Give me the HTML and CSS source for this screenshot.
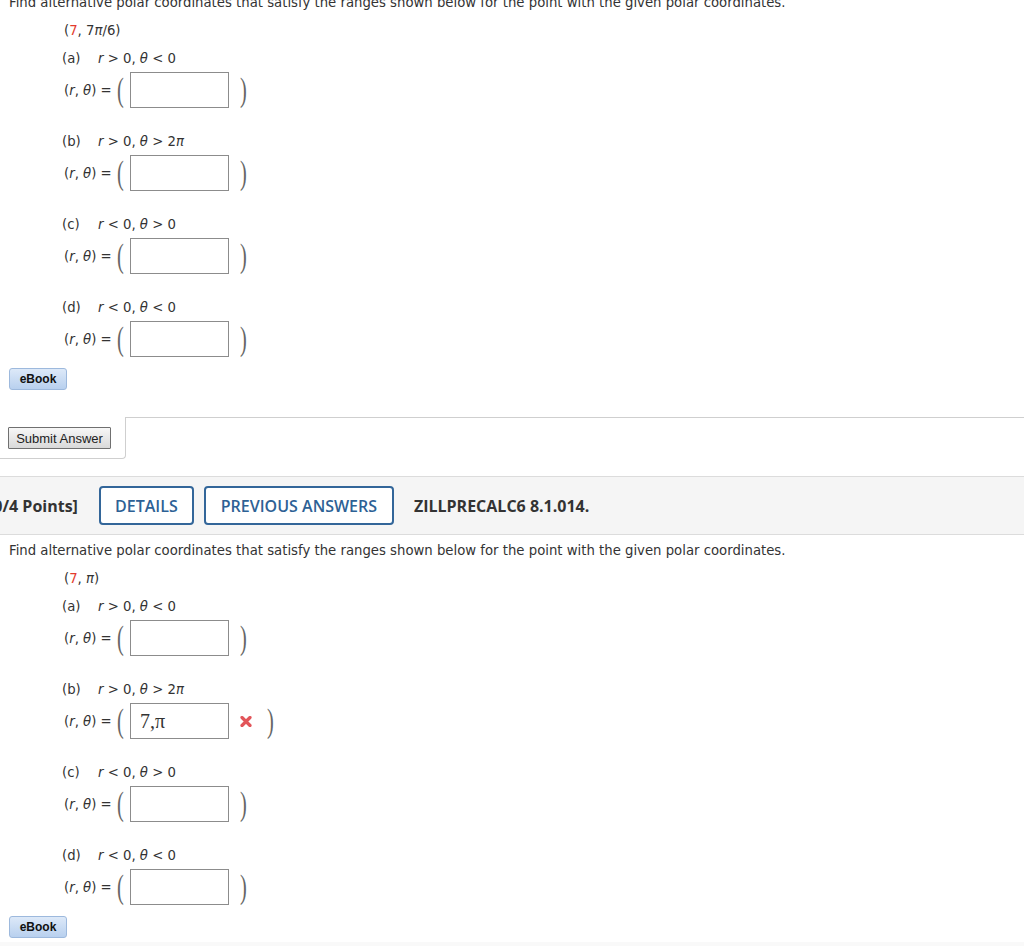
FILE: index.html
```html
<!DOCTYPE html>
<html>
<head>
<meta charset="utf-8">
<link rel="stylesheet" href="styles.css">
</head>
<body>
<div class="q q1">
  <p class="prompt">Find alternative polar coordinates that satisfy the ranges shown below for the point with the given polar coordinates.</p>
  <div class="point">(<span class="red">7</span>, 7<i>π</i>/6)</div>
  <div class="part">
    <div class="label"><span class="tag">(a)</span><i>r</i> &gt; 0, <i>θ</i> &lt; 0</div>
    <div class="answer"><span class="rt">(<i>r</i>, <i>θ</i>) =</span><span class="paren">(</span><span class="box"></span><span class="paren close">)</span></div>
  </div>
  <div class="part">
    <div class="label"><span class="tag">(b)</span><i>r</i> &gt; 0, <i>θ</i> &gt; 2<i>π</i></div>
    <div class="answer"><span class="rt">(<i>r</i>, <i>θ</i>) =</span><span class="paren">(</span><span class="box"></span><span class="paren close">)</span></div>
  </div>
  <div class="part">
    <div class="label"><span class="tag">(c)</span><i>r</i> &lt; 0, <i>θ</i> &gt; 0</div>
    <div class="answer"><span class="rt">(<i>r</i>, <i>θ</i>) =</span><span class="paren">(</span><span class="box"></span><span class="paren close">)</span></div>
  </div>
  <div class="part">
    <div class="label"><span class="tag">(d)</span><i>r</i> &lt; 0, <i>θ</i> &lt; 0</div>
    <div class="answer"><span class="rt">(<i>r</i>, <i>θ</i>) =</span><span class="paren">(</span><span class="box"></span><span class="paren close">)</span></div>
  </div>
  <button class="ebook">eBook</button>
</div>

<div class="submit-row">
  <div class="submit-cell"><button class="submit">Submit Answer</button></div>
  <div class="submit-rest"></div>
</div>

<div class="qbar">
  <span class="points">[0/4 Points]</span>
  <button class="hbtn details">DETAILS</button>
  <button class="hbtn prev">PREVIOUS ANSWERS</button>
  <span class="code">ZILLPRECALC6 8.1.014.</span>
</div>

<div class="q q2">
  <p class="prompt">Find alternative polar coordinates that satisfy the ranges shown below for the point with the given polar coordinates.</p>
  <div class="point">(<span class="red">7</span>, <i>π</i>)</div>
  <div class="part">
    <div class="label"><span class="tag">(a)</span><i>r</i> &gt; 0, <i>θ</i> &lt; 0</div>
    <div class="answer"><span class="rt">(<i>r</i>, <i>θ</i>) =</span><span class="paren">(</span><span class="box"></span><span class="paren close">)</span></div>
  </div>
  <div class="part">
    <div class="label"><span class="tag">(b)</span><i>r</i> &gt; 0, <i>θ</i> &gt; 2<i>π</i></div>
    <div class="answer"><span class="rt">(<i>r</i>, <i>θ</i>) =</span><span class="paren">(</span><span class="box filled">7,π</span><span class="wrong"><svg width="12" height="11" viewBox="0 0 12 11"><path d="M2 1.5 L10 9.5 M10 1.5 L2 9.5" stroke="#e2555a" stroke-width="3.2" stroke-linecap="round"/></svg></span><span class="paren close">)</span></div>
  </div>
  <div class="part">
    <div class="label"><span class="tag">(c)</span><i>r</i> &lt; 0, <i>θ</i> &gt; 0</div>
    <div class="answer"><span class="rt">(<i>r</i>, <i>θ</i>) =</span><span class="paren">(</span><span class="box"></span><span class="paren close">)</span></div>
  </div>
  <div class="part">
    <div class="label"><span class="tag">(d)</span><i>r</i> &lt; 0, <i>θ</i> &lt; 0</div>
    <div class="answer"><span class="rt">(<i>r</i>, <i>θ</i>) =</span><span class="paren">(</span><span class="box"></span><span class="paren close">)</span></div>
  </div>
  <button class="ebook">eBook</button>
</div>
<div class="next-bar"></div>
</body>
</html>
```

FILE: styles.css
```css
html, body {
  margin: 0;
  padding: 0;
  background: #fff;
  overflow: hidden;
}
body {
  font-family: "DejaVu Sans", Verdana, sans-serif;
  font-size: 13.25px;
  color: #333;
}
.q {
  padding-left: 9px;
}
.q1 {
  margin-top: -7px;
}
.prompt {
  margin: 0;
  height: 20px;
  line-height: 20px;
  white-space: nowrap;
}
.point {
  margin-top: 8px;
  margin-left: 55px;
  height: 20px;
  line-height: 20px;
}
.red {
  color: #e33b2e;
}
.part {
  margin-left: 53px;
  margin-top: 8px;
}
.part + .part {
  margin-top: 24px;
}
.label {
  height: 20px;
  line-height: 20px;
}
.tag {
  display: inline-block;
  width: 36px;
}
.answer {
  margin-top: 3px;
  margin-left: 2px;
  height: 36px;
  display: flex;
  align-items: center;
}
.rt {
  width: 53px;
}
.paren {
  font-family: "Liberation Serif", serif;
  font-size: 34px;
  line-height: 36px;
  color: #666;
  width: 13px;
  display: inline-block;
  transform: scaleX(0.6);
  transform-origin: left center;
}
.close {
  margin-left: 11px;
}
.box {
  box-sizing: border-box;
  width: 99px;
  height: 36px;
  border: 1px solid #8c8c8c;
  background: #fff;
}
.filled {
  font-family: "Liberation Serif", serif;
  font-size: 20px;
  line-height: 34px;
  padding-left: 9px;
  color: #333;
}
.wrong {
  display: inline-flex;
  margin-left: 11px;
  margin-right: 4px;
}
.ebook {
  display: block;
  margin-top: 11px;
  box-sizing: border-box;
  width: 58px;
  height: 22px;
  padding: 0;
  border: 1px solid #9db9dd;
  border-radius: 3px;
  background: linear-gradient(#dde9f8, #b8d0ee);
  font-family: "Liberation Sans", Arial, sans-serif;
  font-weight: bold;
  font-size: 12px;
  color: #111;
}
.submit-row {
  display: flex;
  align-items: flex-start;
  margin-top: 27px;
}
.submit-cell {
  box-sizing: border-box;
  width: 126px;
  height: 42px;
  border-right: 1px solid #cfcfcf;
  border-bottom: 1px solid #cfcfcf;
  border-bottom-right-radius: 4px;
  padding-top: 10px;
  padding-left: 8px;
}
.submit-rest {
  flex: 1;
  border-top: 1px solid #cfcfcf;
}
.submit {
  display: block;
  box-sizing: border-box;
  width: 103px;
  height: 22px;
  padding: 0;
  border: 1px solid #707070;
  border-radius: 1px;
  background: linear-gradient(#f7f7f7, #d9d9d9);
  font-family: "Liberation Sans", Arial, sans-serif;
  font-size: 13px;
  color: #222;
}
.qbar {
  margin-top: 17px;
  box-sizing: border-box;
  height: 59px;
  background: #f5f5f5;
  border-top: 1px solid #dcdcdc;
  border-bottom: 1px solid #dcdcdc;
  display: flex;
  align-items: center;
  font-family: "Open Sans", sans-serif;
}
.points {
  margin-left: -12px;
  font-weight: 700;
  font-size: 16px;
  color: #333;
}
.hbtn {
  box-sizing: border-box;
  height: 39px;
  border: 2px solid #336699;
  border-radius: 4px;
  background: #fff;
  font-family: "Open Sans", sans-serif;
  font-weight: 600;
  font-size: 16px;
  color: #2d6195;
  padding: 0;
}
.details {
  margin-left: 21px;
  width: 95px;
}
.prev {
  margin-left: 10px;
  width: 190px;
}
.code {
  margin-left: 20px;
  font-weight: 700;
  font-size: 16px;
  color: #333;
}
.q2 .prompt {
  margin-top: 6px;
}
.next-bar {
  margin-top: 4px;
  height: 20px;
  background: #f9f9f9;
}
```
